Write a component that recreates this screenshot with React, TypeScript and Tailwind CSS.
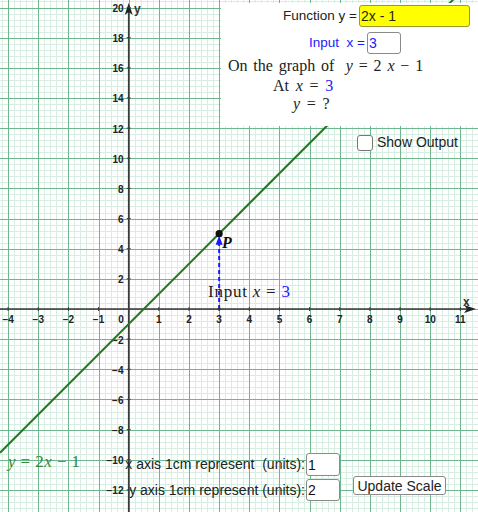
import React from 'react'

// 좌표계: 원점(ox, oy), 한 칸 = s px (x 1단위, y 2단위)
const ox = 128.7
const oy = 309
const s = 30.15
const W = 478
const H = 512
const minor = s / 5

const sx = (x: number) => ox + x * s
const sy = (y: number) => oy - (y * s) / 2

const SANS = '"Liberation Sans", Arial, sans-serif'
const SERIF = '"Liberation Serif", "Times New Roman", serif'

function Graph() {
  const vLines: { x: number; major: boolean }[] = []
  for (let k = -21; k <= 57; k++) vLines.push({ x: Math.round(ox + k * minor) + 0.5, major: k % 5 === 0 })
  const hLines: { y: number; major: boolean }[] = []
  for (let k = -51; k <= 33; k++) hLines.push({ y: Math.round(oy + k * minor) + 0.5, major: k % 5 === 0 })

  const xTicks = [-4, -3, -2, -1, 1, 2, 3, 4, 5, 6, 7, 8, 9, 10, 11]
  const yTicks = [20, 18, 16, 14, 12, 10, 8, 6, 4, 2, -2, -4, -6, -8, -10, -12]
  const fmt = (n: number) => (n < 0 ? '\u2212' + Math.abs(n) : String(n))

  const f = (x: number) => 2 * x - 1
  const x0 = (0 - ox) / s
  const x1 = (W - ox) / s
  const px = sx(3)
  const py = sy(5)

  return (
    <svg width={W} height={H} className="absolute left-0 top-0">
      <rect width={W} height={H} fill="#ffffff" />
      <g shapeRendering="crispEdges">
        {vLines.filter((l) => !l.major).map((l, i) => (
          <line key={'vm' + i} x1={l.x} y1={0} x2={l.x} y2={H} stroke="#d9eee2" strokeWidth={1} />
        ))}
        {hLines.filter((l) => !l.major).map((l, i) => (
          <line key={'hm' + i} x1={0} y1={l.y} x2={W} y2={l.y} stroke="#d9eee2" strokeWidth={1} />
        ))}
        {vLines.filter((l) => l.major).map((l, i) => (
          <line key={'vM' + i} x1={l.x} y1={0} x2={l.x} y2={H} stroke="#6db68e" strokeWidth={1} />
        ))}
        {hLines.filter((l) => l.major).map((l, i) => (
          <line key={'hM' + i} x1={0} y1={l.y} x2={W} y2={l.y} stroke="#6db68e" strokeWidth={1} />
        ))}
      </g>

      {/* axes */}
      <line x1={0} y1={oy} x2={470} y2={oy} stroke="#3a3a3a" strokeWidth={1.6} />
      <polygon points={`476,${oy} 464,${oy - 4} 467,${oy} 464,${oy + 4}`} fill="#222" />
      <line x1={ox} y1={10} x2={ox} y2={H} stroke="#3a3a3a" strokeWidth={1.6} />
      <polygon points={`${ox},3 ${ox - 4},15 ${ox},12 ${ox + 4},15`} fill="#222" />
      <text x={134} y={13} fontFamily={SANS} fontSize={12} fontWeight={700} fill="#333">y</text>
      <text x={463} y={306} fontFamily={SANS} fontSize={12} fontWeight={700} fill="#333">x</text>

      {xTicks.map((n) => (
        <g key={'xt' + n}>
          <line x1={sx(n)} y1={oy - 2} x2={sx(n)} y2={oy + 2} stroke="#3a3a3a" strokeWidth={1} />
          <text x={sx(n)} y={323} textAnchor="middle" fontFamily={SANS} fontSize={10} fontWeight={700} fill="#222">
            {fmt(n)}
          </text>
        </g>
      ))}
      <text x={121} y={323} textAnchor="middle" fontFamily={SANS} fontSize={10} fontWeight={700} fill="#222">0</text>
      {yTicks.map((n) => (
        <g key={'yt' + n}>
          <line x1={ox - 2} y1={sy(n)} x2={ox + 2} y2={sy(n)} stroke="#3a3a3a" strokeWidth={1} />
          <text x={123.5} y={sy(n) + 4.5} textAnchor="end" fontFamily={SANS} fontSize={10} fontWeight={700} fill="#222">
            {fmt(n)}
          </text>
        </g>
      ))}

      {/* y = 2x - 1 */}
      <line x1={sx(x0)} y1={sy(f(x0))} x2={sx(x1)} y2={sy(f(x1))} stroke="#1f7a22" strokeWidth={2} />

      {/* dashed vector to P */}
      <line x1={px} y1={oy} x2={px} y2={py + 9} stroke="#1a1aff" strokeWidth={2} strokeDasharray="4 3" />
      <polygon points={`${px},${py + 2} ${px - 3.5},${py + 11} ${px + 3.5},${py + 11}`} fill="#1a1aff" />
      <circle cx={px} cy={oy} r={1.6} fill="#333" />
      <circle cx={px} cy={py} r={3.6} fill="#111" />
      <text x={222} y={248} fontFamily={SERIF} fontSize={16} fontWeight={700} fontStyle="italic" fill="#111">P</text>

      <text x={208} y={297} fontFamily={SERIF} fontSize={17} fill="#222" textLength={82} lengthAdjust="spacing">
        Input <tspan fontStyle="italic">x</tspan> = <tspan fill="#1a1aff">3</tspan>
      </text>

      <text x={8} y={467} fontFamily={SERIF} fontSize={17} fill="#2f8a33" textLength={72} lengthAdjust="spacing">
        <tspan fontStyle="italic">y</tspan> = 2<tspan fontStyle="italic">x</tspan> {'\u2212'} 1
      </text>
    </svg>
  )
}

function Box({ value, className = '' }: { value: string; className?: string }) {
  return (
    <div
      className={`flex h-[22px] items-center rounded-[3px] border border-[#8a8a8a] bg-white pl-[1px] text-[14px] leading-none ${className}`}
    >
      {value}
    </div>
  )
}

export default function App() {
  return (
    <div className="relative h-[512px] w-[478px] overflow-hidden bg-white" style={{ fontFamily: SANS }}>
      <Graph />

      {/* top panel */}
      <div className="absolute left-[221px] top-[3px] flex h-[123px] w-[257px] flex-col bg-white">
        <div className="mt-[2px] flex items-center justify-end pr-[8px]">
          <span className="mr-[2px] text-[13.5px] text-[#222]">Function y =</span>
          <div className="flex h-[22px] w-[111px] items-center rounded-[3px] border border-[#9a9a2a] bg-[#ffff00] pl-[1px] text-[14px] text-[#1b2a10]">
            2x - 1
          </div>
        </div>
        <div className="mt-[5px] flex items-center justify-end pr-[77px]">
          <span className="mr-[2px] whitespace-pre text-[13.5px] text-[#1a1aff]">Input  x =</span>
          <Box value="3" className="w-[34px] text-[#1a1aff]" />
        </div>
        <div
          className="mt-[2px] h-[20px] whitespace-pre pl-[7px] text-[16px] leading-[20px] text-[#222] [word-spacing:1.8px]"
          style={{ fontFamily: SERIF }}
        >
          On the graph of  <i>y</i> = 2 <i>x</i> {'\u2212'} 1
        </div>
        <div
          className="h-[19px] whitespace-pre pl-[52px] text-[16px] leading-[19px] text-[#222] [word-spacing:2.7px]"
          style={{ fontFamily: SERIF }}
        >
          At <i>x</i> = <span className="text-[#1a1aff]">3</span>
        </div>
        <div
          className="h-[18px] whitespace-pre pl-[72px] text-[16px] leading-[18px] text-[#222] [word-spacing:2.7px]"
          style={{ fontFamily: SERIF }}
        >
          <i>y</i> = ?
        </div>
      </div>

      {/* show output */}
      <div className="absolute left-[357px] top-[132px] flex items-center">
        <div className="h-[16px] w-[16px] rounded-[3px] border border-[#777] bg-white" />
        <span className="ml-[4px] text-[14px] text-[#222]">Show Output</span>
      </div>

      {/* scale controls */}
      <div className="absolute left-0 top-[453px] flex w-[340px] items-center justify-end">
        <span className="mr-[1px] whitespace-pre text-[14px] text-[#222]">x axis 1cm represent  (units):</span>
        <Box value="1" className="h-[23px] w-[34px] text-[#111]" />
      </div>
      <div className="absolute left-0 top-[479px] flex w-[340px] items-center justify-end">
        <span className="mr-[1px] whitespace-pre text-[14px] text-[#222]">y axis 1cm represent (units):</span>
        <Box value="2" className="w-[34px] text-[#111]" />
      </div>
      <button
        type="button"
        className="absolute left-[353px] top-[476px] flex h-[19px] w-[93px] items-center justify-center rounded-[3px] border border-[#8a8a8a] bg-white text-[14px] leading-none text-[#222]"
      >
        Update Scale
      </button>
    </div>
  )
}
